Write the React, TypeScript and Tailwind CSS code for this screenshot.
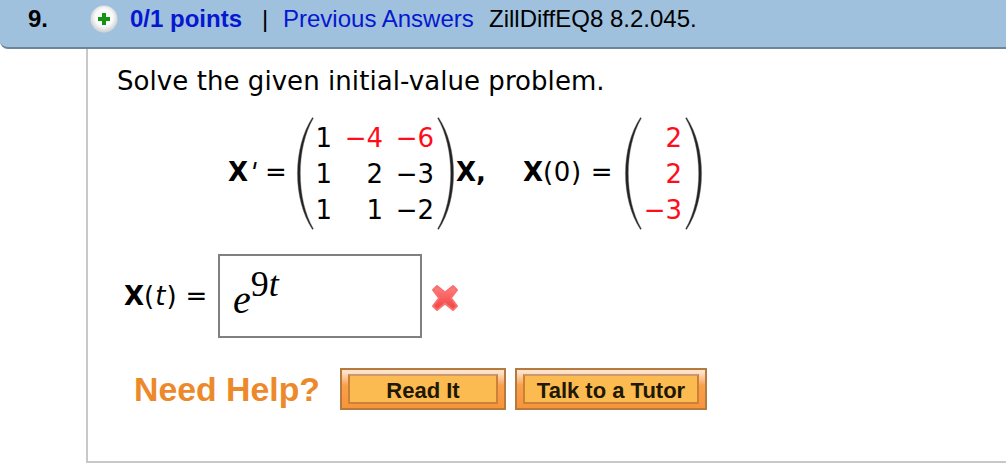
import clsx from 'clsx';

const coefficients = [
  ['1', '−4', '−6'],
  ['1', '2', '−3'],
  ['1', '1', '−2'],
];

const initialValues = ['2', '2', '−3'];

function Paren({ side }: { side: 'left' | 'right' }) {
  return (
    <svg
      width="18"
      height="114"
      viewBox="0 0 18 114"
      className={clsx('shrink-0', side === 'right' && '-scale-x-100')}
    >
      <path
        d="M16.4 0.5C-3.6 31 -3.6 82 16.4 112.5L17.4 111.8C0 82 0 31 17.4 1.2Z"
        fill="#222"
        stroke="#777"
        strokeWidth="0.4"
      />
    </svg>
  );
}

function PlusBadge() {
  return (
    <svg width="28" height="28" viewBox="0 0 28 28" className="shrink-0">
      <defs>
        <radialGradient id="badge" cx="0.5" cy="0.45" r="0.5">
          <stop offset="0.65" stopColor="#fafafa" />
          <stop offset="1" stopColor="#d4d6d8" />
        </radialGradient>
      </defs>
      <circle cx="14" cy="14" r="13.5" fill="url(#badge)" />
      <path d="M12 8h4v4h4v4h-4v4h-4v-4H8v-4h4z" fill="#159315" />
    </svg>
  );
}

function WrongMark() {
  return (
    <svg width="28" height="28" viewBox="0 0 28 28" className="shrink-0">
      <defs>
        <linearGradient id="wrong" x1="0" y1="0" x2="0" y2="1">
          <stop offset="0" stopColor="#ff8080" />
          <stop offset="1" stopColor="#f04040" />
        </linearGradient>
      </defs>
      <path
        d="M6 2L14 8.5L22 2L26 6L20 14L26 22L22 26L14 19.5L6 26L2 22L8 14L2 6Z"
        fill="url(#wrong)"
        stroke="#fa7070"
        strokeWidth="2"
        strokeLinejoin="round"
      />
    </svg>
  );
}

function HelpButton({ label, className }: { label: string; className: string }) {
  return (
    <button
      className={clsx(
        'h-[42px] shrink-0 border-2 border-[#b57a3e] bg-linear-to-b from-[#fde3cb] from-5% via-[#f9a04b] via-40% to-[#f7953b] px-[6px] py-[4px]',
        className,
      )}
    >
      <span className="flex h-full items-center justify-center border-2 border-[#c98238] border-t-[#c99a72] bg-[#fbbb50] pt-0.5 font-['Liberation_Sans',sans-serif] text-[22px] font-bold whitespace-nowrap text-[#211803]">
        {label}
      </span>
    </button>
  );
}

export default function App() {
  return (
    <div className="h-[476px] w-[1006px] overflow-hidden bg-white font-['DejaVu_Sans',sans-serif] text-[26px] text-black">
      <header className="flex h-[49px] rounded-bl-[8px] border-b-2 border-[#6d8598] bg-[#9fc1de] pt-px font-['Liberation_Sans',sans-serif] text-2xl leading-9 whitespace-pre">
        <span className="w-[90px] pl-7 font-bold">9.</span>
        <span className="w-10 pt-1">
          <PlusBadge />
        </span>
        <span className="w-[132px] font-bold text-[#0518d0]">0/1 points</span>
        <span className="w-[21px]">|</span>
        <span className="w-[206px] text-[#0518d0]">Previous Answers</span>
        <span>ZillDiffEQ8 8.2.045.</span>
      </header>

      <main className="ml-[86px] h-[414px] border-b-2 border-l-2 border-[#c8c8c8] pt-4">
        <p className="pl-[29px] leading-8 tracking-[0.06px] whitespace-nowrap">
          Solve the given initial-value problem.
        </p>

        <div className="mt-5 flex h-[114px] items-center pl-[140px] leading-9 whitespace-nowrap">
          <span className="flex w-[68px] shrink-0 pb-1">
            <b className="w-[22px]">X</b>
            <span className="w-[15px] -skew-x-12">'</span>=
          </span>
          <Paren side="left" />
          <div className="grid w-[123px] shrink-0 grid-cols-[18px_51px_51px] text-right">
            {coefficients.map((row, r) =>
              row.map((value, c) => (
                <span key={`${r}-${c}`} className={r === 0 && c > 0 ? 'text-[#ff0d1b]' : undefined}>
                  {value}
                </span>
              )),
            )}
          </div>
          <Paren side="right" />
          <b className="w-[67px] shrink-0 pb-1 pl-px">X,</b>
          <span className="w-[102px] shrink-0 pb-1 pl-px">
            <b>X</b>
            <span className="tracking-[0.6px]">(0)</span>
            <span className="pl-[9px]">=</span>
          </span>
          <Paren side="left" />
          <div className="w-[43px] shrink-0 pr-[3px] text-right text-[#ff0d1b]">
            {initialValues.map((value, i) => (
              <div key={i}>{value}</div>
            ))}
          </div>
          <Paren side="right" />
        </div>

        <div className="mt-[23px] flex h-[84px] items-center">
          <span className="w-[130px] shrink-0 pl-[36px] whitespace-nowrap">
            <b>X</b>
            <span className="tracking-[1px]">
              (<i>t</i>)
            </span>
            <span className="pl-2">=</span>
          </span>
          <div className="h-[84px] w-[204px] shrink-0 border-2 border-[#808080] pt-3.5 pl-[13px] font-['Liberation_Serif',serif] text-[40px] italic">
            e
            <sup className="-top-[0.46em] text-[36px] leading-none">
              <span className="not-italic">9</span>t
            </sup>
          </div>
          <span className="pt-1 pl-[9px]">
            <WrongMark />
          </span>
        </div>

        <div className="mt-[30px] flex h-[42px] items-center">
          <span className="w-[252px] shrink-0 pl-[46px] font-['Liberation_Sans',sans-serif] text-[33.8px] font-bold whitespace-nowrap text-[#ec8a2b]">
            Need Help?
          </span>
          <HelpButton label="Read It" className="w-[166px]" />
          <HelpButton label="Talk to a Tutor" className="ml-[9px] w-[192px]" />
        </div>
      </main>
    </div>
  );
}
